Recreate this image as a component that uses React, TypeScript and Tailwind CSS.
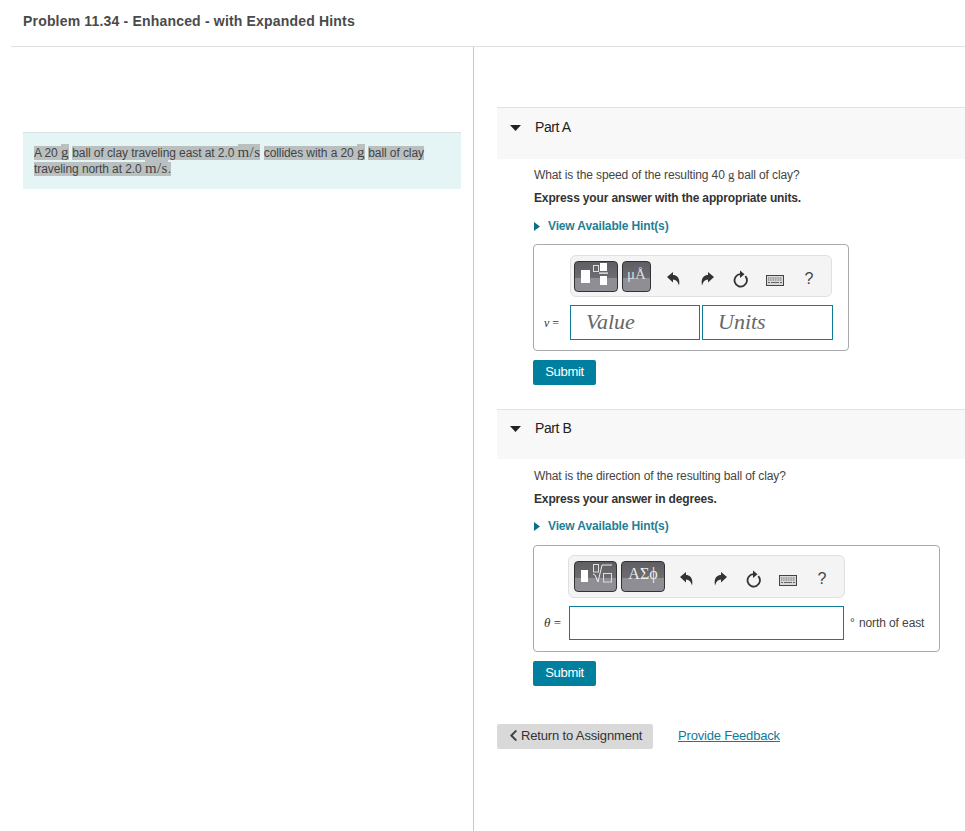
import { ReactNode } from 'react';
import { FaChevronLeft } from 'react-icons/fa';

const serif = "font-['Liberation_Serif',serif]";

function Hl({ children, math }: { children: ReactNode; math?: boolean }) {
  return (
    <span className={`bg-[#bac0c0] ${math ? `${serif} text-[15px] leading-[14px] tracking-[0.4px]` : 'tracking-[-0.08px]'}`}>{children}</span>
  );
}

function Keyboard() {
  return (
    <svg width="18" height="11" viewBox="0 0 18 11">
      <rect x="0.5" y="0.5" width="17" height="10" fill="#d8d8d8" stroke="#444" />
      <path d="M2 3h14M2 5h14" stroke="#666" strokeWidth="1.2" strokeDasharray="1 0.7" />
      <path d="M2 7.5h2M5 7.5h8M14 7.5h2" stroke="#666" strokeWidth="1.2" />
    </svg>
  );
}

function Undo({ flip }: { flip?: boolean }) {
  return (
    <svg width="13" height="14" viewBox="0 0 13 14" className={flip ? '-scale-x-100' : ''}>
      <path d="M0 5L6 0V3C10 3 13.500 6 12 13.500C11 9.500 9 7.500 6 7.500V10.500Z" fill="#333" />
    </svg>
  );
}

function Reset() {
  return (
    <svg width="16" height="18" viewBox="0 0 16 18" fill="none">
      <path d="M7.500 4.200A6.200 6.200 0 1 0 12.300 6.200" stroke="#333" strokeWidth="1.800" />
      <path d="M7 0.500V8L11.500 4.200Z" fill="#333" />
    </svg>
  );
}

function MathButton({ children, width }: { children: ReactNode; width: string }) {
  return (
    <div
      className={`${width} h-[31px] shrink-0 rounded-[4px] border border-[#333] bg-[linear-gradient(#5f5f63_0,#6d6d71_54%,#8e8e94_54%,#8e8e94_100%)] flex items-center justify-center`}
    >
      {children}
    </div>
  );
}

function TemplatesIcon() {
  return (
    <svg width="42" height="29" viewBox="1 1 42 29">
      <rect x="7" y="9" width="9" height="13" fill="#fff" />
      <rect x="19.500" y="4.500" width="5" height="6" fill="none" stroke="#ddd" />
      <rect x="26" y="2" width="7" height="8" fill="#fff" />
      <rect x="25" y="11.500" width="9" height="1.200" fill="#fff" />
      <rect x="26" y="15" width="7" height="9" fill="#fff" />
    </svg>
  );
}

function RadicalIcon() {
  return (
    <svg width="41" height="29" viewBox="1 1 41 29" fill="none">
      <rect x="7" y="9" width="7" height="12" fill="#fff" />
      <rect x="19.500" y="3.500" width="5" height="7.500" stroke="#ddd" />
      <path d="M19 13l2 1 3 7 4-17h10" stroke="#eee" strokeWidth="1" />
      <rect x="29.500" y="12.500" width="8" height="8.500" stroke="#ddd" />
    </svg>
  );
}

function Toolbar({ children, className }: { children: ReactNode; className: string }) {
  return (
    <div className={`rounded-[6px] border border-[#e0e0e0] bg-[#f4f4f4] flex items-center ${className}`}>
      {children}
    </div>
  );
}

function ToolIcons() {
  return (
    <div className="flex items-center mt-[5px] text-[#333]">
      <div className="w-[34px] flex justify-center"><Undo /></div>
      <div className="w-[34px] flex justify-center"><Undo flip /></div>
      <div className="w-[34px] flex justify-center"><Reset /></div>
      <div className="w-[34px] flex justify-center mt-[3px]"><Keyboard /></div>
      <div className="w-[34px] text-center text-[16px] leading-[18px] text-[#444]">?</div>
    </div>
  );
}

function PartHeader({ label, height, top }: { label: string; height: string; top: string }) {
  return (
    <div className={`${height} ${top} bg-[#f8f8f8] border-t border-[#e2e2e2] flex items-start pl-[13px]`}>
      <svg width="11" height="6" viewBox="0 0 11 6" className="mt-[6px]">
        <polygon points="0,0 11,0 5.500,6" fill="#222" />
      </svg>
      <span className="ml-[14px] text-[14px] leading-[16px] tracking-[-0.4px] text-[#222]">{label}</span>
    </div>
  );
}

function Hint({ top }: { top: string }) {
  return (
    <div className={`flex items-center h-[16px] ${top} text-[12px] tracking-[-0.14px] font-bold text-[#1f7f96]`}>
      <svg width="6" height="9" viewBox="0 0 6 9" className="mr-[8px]">
        <polygon points="0,0 6,4.500 0,9" fill="#0b6f88" />
      </svg>
      View Available Hint(s)
    </div>
  );
}

function Submit() {
  return (
    <button className="block w-[63px] h-[25px] pb-[2px] rounded-[2px] bg-[#007f9f] text-white text-[13px] tracking-[-0.3px]">Submit</button>
  );
}

export default function App() {
  return (
    <div className="w-[965px] h-[831px] overflow-hidden bg-white font-['Liberation_Sans',sans-serif] text-[#333]">
      <div className="ml-[11px] h-[47px] border-b border-[#e0e0e0] pl-[12px] pt-[13px]">
        <h1 className="text-[14px] leading-[16px] font-bold text-[#4a4a4a] tracking-[0.18px]">
          Problem 11.34 - Enhanced - with Expanded Hints
        </h1>
      </div>

      <div className="flex h-[784px]">
        {/* Problem statement */}
        <div className="w-[474px] shrink-0 border-r border-[#c4c9cf] pl-[23px] pr-[12px] pt-[85px]">
          <div className="h-[57px] bg-[#e5f5f6] border-t border-[#d8e2e4] pl-[11px] pt-[12px] text-[12px] leading-[16px] text-[#444]">
            <Hl>A 20 </Hl>
            <Hl math>g</Hl> <Hl>ball of clay traveling east at 2.0 </Hl>
            <Hl math>m/s</Hl> <Hl>collides with a 20 </Hl>
            <Hl math>g</Hl> <Hl>ball of clay</Hl>
            <br />
            <Hl>traveling north at 2.0 </Hl>
            <Hl math>m/s</Hl>
            <Hl>.</Hl>
          </div>
        </div>

        <div className="flex-1 pl-[23px] pt-[60px]">
          {/* Part A */}
          <PartHeader label="Part A" height="h-[52px]" top="pt-[11px]" />
          <div className="pl-[36px]">
            <p className="mt-[8px] ml-[1px] text-[12px] leading-[16px] tracking-[-0.11px] text-[#444]">
              What is the speed of the resulting 40 <span className={`${serif} text-[13px]`}>g</span> ball of clay?
            </p>
            <p className="mt-[7px] ml-[1px] text-[12px] leading-[16px] tracking-[-0.15px] font-bold text-[#333]">
              Express your answer with the appropriate units.
            </p>
            <div className="ml-[1px]">
              <Hint top="mt-[12px]" />
            </div>
            <div className="mt-[10px] w-[316px] h-[107px] rounded-[4px] border border-[#aaa] pl-[36px] pt-[10px]">
              <Toolbar className="w-[262px] h-[42px] pl-[3px] gap-[4px]">
                <MathButton width="w-[44px]">
                  <TemplatesIcon />
                </MathButton>
                <MathButton width="w-[29px]">
                  <span className={`${serif} text-[#ddd] text-[15px] leading-none pb-[4px]`}>μÅ</span>
                </MathButton>
                <div className="ml-[1px]">
                  <ToolIcons />
                </div>
              </Toolbar>
              <div className="flex items-center mt-[8px] -ml-[26px]">
                <span className={`${serif} w-[26px] text-[12px] text-[#333]`}>
                  <i>v</i> =
                </span>
                <div className={`${serif} w-[130px] h-[35px] border border-[#0f7c99] flex items-center pl-[15px] pb-[2px] text-[22px] italic text-[#666]`}>
                  Value
                </div>
                <div className={`${serif} ml-[2px] w-[131px] h-[35px] border border-[#0f7c99] flex items-center pl-[15px] pb-[2px] text-[22px] italic text-[#666]`}>
                  Units
                </div>
              </div>
            </div>
            <div className="mt-[9px]">
              <Submit />
            </div>
          </div>

          {/* Part B */}
          <div className="mt-[24px]">
            <PartHeader label="Part B" height="h-[50px]" top="pt-[10px]" />
          </div>
          <div className="pl-[36px]">
            <p className="mt-[9px] ml-[1px] text-[12px] leading-[16px] tracking-[-0.11px] text-[#444]">
              What is the direction of the resulting ball of clay?
            </p>
            <p className="mt-[7px] ml-[1px] text-[12px] leading-[16px] tracking-[-0.15px] font-bold text-[#333]">
              Express your answer in degrees.
            </p>
            <div className="ml-[1px]">
              <Hint top="mt-[11px]" />
            </div>
            <div className="mt-[11px] w-[407px] h-[107px] rounded-[4px] border border-[#aaa] pl-[34px] pt-[9px]">
              <Toolbar className="w-[277px] h-[43px] pl-[5px] gap-[4px]">
                <MathButton width="w-[43px]">
                  <RadicalIcon />
                </MathButton>
                <MathButton width="w-[44px]">
                  <span className={`${serif} text-[#eee] text-[16px] leading-none pb-[5px]`}>ΑΣϕ</span>
                </MathButton>
                <ToolIcons />
              </Toolbar>
              <div className="flex items-center mt-[8px] -ml-[24px]">
                <span className={`${serif} w-[25px] text-[13px] text-[#333]`}>
                  <i>θ</i> =
                </span>
                <div className="w-[275px] h-[34px] border border-[#0f7c99]" />
                <span className="ml-[6px] text-[12px] tracking-[-0.1px] text-[#444] whitespace-nowrap">
                  <span className="mr-[1px]">°</span> north of east
                </span>
              </div>
            </div>
            <div className="mt-[9px]">
              <Submit />
            </div>
          </div>

          {/* Footer */}
          <div className="flex items-center mt-[38px]">
            <div className="w-[156px] h-[25px] pb-[2px] rounded-[2px] bg-[#d9d9d9] flex items-center pl-[11px] text-[13px] tracking-[-0.15px] text-[#333]">
              <FaChevronLeft className="w-[11px] h-[13px] mr-[2px] text-[#444]" />
              Return to Assignment
            </div>
            <a className="ml-[25px] pb-[2px] text-[13px] tracking-[-0.18px] text-[#0f7c99] underline">Provide Feedback</a>
          </div>
        </div>
      </div>
    </div>
  );
}
